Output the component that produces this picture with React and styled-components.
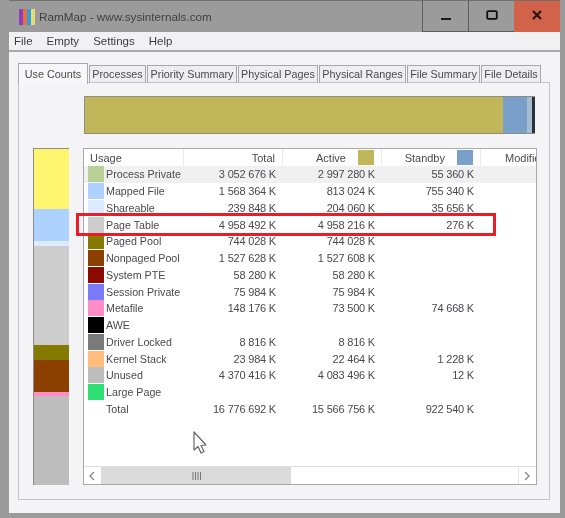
import React from 'react'
import styled, { createGlobalStyle } from 'styled-components'

const Global = createGlobalStyle`
  html, body { margin: 0; padding: 0; background: #9a9a9a; }
  body { font-family: "Liberation Sans", Arial, sans-serif; }
`

const Window = styled.div`
  position: relative;
  width: 565px;
  height: 518px;
  box-sizing: border-box;
  padding: 0 5px 5px 9px;
  background: #9b9b9b;
  display: flex;
  flex-direction: column;
  overflow: hidden;
  filter: blur(0.45px);
  color: #4a4a4f;
  font-size: 11px;
`

const TitleBar = styled.div`
  height: 32px;
  flex: none;
  display: flex;
  align-items: center;
  border-top: 1px solid #6f6f6f;
  box-sizing: border-box;
`

const AppLogo = styled.svg`
  width: 16px;
  height: 16px;
  margin-left: 10px;
  flex: none;
`

const Title = styled.div`
  margin-left: 4px;
  font-size: 11.7px;
  color: #404040;
  flex: 1;
`

const WinButton = styled.div`
  width: 46px;
  height: 31px;
  padding-bottom: 3px;
  display: flex;
  align-items: center;
  justify-content: center;
  box-sizing: border-box;
  border-left: ${p => (p.$close ? 'none' : '1px solid #5f5f5f')};
  border-bottom: ${p => (p.$close ? 'none' : '1px solid #5f5f5f')};
  background: ${p => (p.$close ? '#d2634a' : 'transparent')};
`

const MenuBar = styled.div`
  height: 20px;
  box-sizing: border-box;
  flex: none;
  display: flex;
  align-items: center;
  gap: 14px;
  padding-left: 5px;
  background: #f1f1f3;
  border-bottom: 2px solid #a9a9a9;
  font-size: 11.5px;
  color: #3c3c3c;
`

const Client = styled.div`
  flex: 1;
  min-height: 0;
  display: flex;
  flex-direction: column;
  background: #f4f4f6;
  padding: 11px 10px 13px 9px;
`

const TabRow = styled.div`
  display: flex;
  height: 19px;
  flex: none;
  position: relative;
  z-index: 1;
`

const Tab = styled.div`
  width: ${p => p.$w}px;
  box-sizing: border-box;
  height: ${p => (p.$active ? '21px' : '18px')};
  margin-top: ${p => (p.$active ? '0' : '2px')};
  margin-right: 1px;
  display: flex;
  align-items: center;
  justify-content: center;
  background: ${p => (p.$active ? '#f7f7f9' : '#eeeef0')};
  border: 1px solid #a8a8a8;
  border-bottom: ${p => (p.$active ? 'none' : '1px solid #c4c4c4')};
  white-space: nowrap;
  font-size: 10.8px;
`

const Panel = styled.div`
  flex: 1;
  min-height: 0;
  box-sizing: border-box;
  display: grid;
  grid-template-columns: 36px 454px;
  grid-template-rows: 38px 337px;
  column-gap: 14px;
  row-gap: 14px;
  padding: 13px 12px 13px 14px;
  background: #f4f4f6;
  border: 1px solid #c6c6c8;
`

const TopBar = styled.div`
  grid-column: 2;
  grid-row: 1;
  width: 451px;
  margin-left: 1px;
  display: flex;
  border: 1px solid #8d8d80;
  border-right: none;
  box-sizing: border-box;
`

const Segment = styled.div`
  width: ${p => p.$size}px;
  background: ${p => p.$color};
`

const SideBar = styled.div`
  grid-column: 1;
  grid-row: 2;
  display: flex;
  flex-direction: column;
  box-sizing: border-box;
  border-top: 1px solid #8d8d80;
  border-left: 1px solid #8d8d8d;
`

const SideSegment = styled.div`
  height: ${p => p.$size}px;
  background: ${p => p.$color};
`

const List = styled.div`
  grid-column: 2;
  grid-row: 2;
  box-sizing: border-box;
  background: #fff;
  border: 1px solid #a9a9a9;
  display: flex;
  flex-direction: column;
  overflow: hidden;
`

const HeaderRow = styled.div`
  height: 17px;
  flex: none;
  display: grid;
  grid-template-columns: 100px 99px 99px 99px 60px;
`

const HeaderCell = styled.div`
  display: flex;
  align-items: center;
  justify-content: ${p => (p.$left ? 'flex-start' : 'flex-end')};
  gap: ${p => p.$gap || 0}px;
  box-sizing: border-box;
  padding: ${p => (p.$left ? '0 0 0 6px' : '0 7px 0 0')};
  border-right: 1px solid #e9e9e9;
  white-space: nowrap;
  overflow: hidden;
`

const HeaderSwatch = styled.span`
  width: 16px;
  height: 15px;
  background: ${p => p.$color};
`

const ClippedLabel = styled.span`
  margin-left: 18px;
`

const Rows = styled.div`
  flex: 1;
  min-height: 0;
`

const Row = styled.div`
  height: 16.75px;
  display: grid;
  grid-template-columns: 100px 99px 99px 99px;
  align-items: center;
  background: ${p => (p.$selected ? '#f0f0f0' : 'transparent')};
`

const NameCell = styled.div`
  display: flex;
  align-items: center;
  height: 100%;
  padding-left: 4px;
  white-space: nowrap;
  font-size: 10.7px;
`

const Swatch = styled.span`
  width: 16px;
  height: 16px;
  margin-right: 2px;
  flex: none;
  background: ${p => p.$color || 'transparent'};
`

const Value = styled.div`
  text-align: right;
  padding-right: 7px;
  white-space: nowrap;
  letter-spacing: -0.2px;
`

const ScrollBar = styled.div`
  height: 17px;
  flex: none;
  display: flex;
  align-items: stretch;
  border-top: 1px solid #dedede;
`

const ScrollArrow = styled.div`
  width: 16px;
  flex: none;
  display: flex;
  align-items: center;
  justify-content: center;
  margin-left: ${p => p.$ml || 0}px;
  border-left: ${p => (p.$ml ? '1px solid #e4e4e4' : 'none')};
`

const Thumb = styled.div`
  width: 190px;
  margin-left: 1px;
  display: flex;
  align-items: center;
  justify-content: center;
  background: #dadada;
`

const Highlight = styled.div`
  position: absolute;
  left: 76px;
  top: 213px;
  width: 420px;
  height: 23px;
  box-sizing: border-box;
  border: 3px solid #ea1c26;
`

const Pointer = styled.svg`
  position: absolute;
  left: 192px;
  top: 431px;
  width: 16px;
  height: 25px;
`

const tabs = [
  ['Use Counts', 70, true],
  ['Processes', 57],
  ['Priority Summary', 90],
  ['Physical Pages', 80],
  ['Physical Ranges', 87],
  ['File Summary', 73],
  ['File Details', 60],
]

const rows = [
  ['Process Private', '#b8cf96', '3 052 676 K', '2 997 280 K', '55 360 K'],
  ['Mapped File', '#aed2ff', '1 568 364 K', '813 024 K', '755 340 K'],
  ['Shareable', '#dcebff', '239 848 K', '204 060 K', '35 656 K'],
  ['Page Table', '#cdcdcd', '4 958 492 K', '4 958 216 K', '276 K'],
  ['Paged Pool', '#857a00', '744 028 K', '744 028 K', ''],
  ['Nonpaged Pool', '#8b4000', '1 527 628 K', '1 527 608 K', ''],
  ['System PTE', '#8c0a00', '58 280 K', '58 280 K', ''],
  ['Session Private', '#7a7aff', '75 984 K', '75 984 K', ''],
  ['Metafile', '#ff8cc4', '148 176 K', '73 500 K', '74 668 K'],
  ['AWE', '#000000', '', '', ''],
  ['Driver Locked', '#7a7a7a', '8 816 K', '8 816 K', ''],
  ['Kernel Stack', '#ffbd7d', '23 984 K', '22 464 K', '1 228 K'],
  ['Unused', '#bdbdbd', '4 370 416 K', '4 083 496 K', '12 K'],
  ['Large Page', '#2ee073', '', '', ''],
  ['Total', null, '16 776 692 K', '15 566 756 K', '922 540 K'],
]

const sideSegments = [
  [60, '#fff56e'],
  [32, '#aed2ff'],
  [5, '#dcebff'],
  [99, '#cdcdcd'],
  [15, '#857a00'],
  [32, '#8b4000'],
  [4, '#ff8cc4'],
  [89, '#bdbdbd'],
]

const App = () => (
  <Window>
    <Global />
    <TitleBar>
      <AppLogo viewBox="0 0 16 16">
        <rect x="0" y="0" width="4" height="16" fill="#8e3fc0" />
        <rect x="4" y="0" width="4" height="16" fill="#e8703a" />
        <rect x="8" y="0" width="4" height="16" fill="#2f9ee0" />
        <rect x="12" y="0" width="4" height="16" fill="#e8dc70" />
      </AppLogo>
      <Title>RamMap - www.sysinternals.com</Title>
      <WinButton>
        <svg width="12" height="12" viewBox="0 0 12 12">
          <rect x="1" y="9" width="10" height="2" fill="#1c1c1c" />
        </svg>
      </WinButton>
      <WinButton>
        <svg width="12" height="12" viewBox="0 0 12 12">
          <rect x="1.2" y="2.2" width="9.6" height="7.6" rx="1" fill="none" stroke="#111" strokeWidth="1.8" />
        </svg>
      </WinButton>
      <WinButton $close>
        <svg width="12" height="12" viewBox="0 0 12 12">
          <path d="M2 2 L10 10 M10 2 L2 10" stroke="#2a1410" strokeWidth="2.2" fill="none" />
        </svg>
      </WinButton>
    </TitleBar>

    <MenuBar>
      <span>File</span>
      <span>Empty</span>
      <span>Settings</span>
      <span>Help</span>
    </MenuBar>

    <Client>
      <TabRow>
        {tabs.map(([label, w, active]) => (
          <Tab key={label} $w={w} $active={active}>{label}</Tab>
        ))}
      </TabRow>
      <Panel>
        <TopBar>
          <Segment $size={418} $color="#c1b75a" />
          <Segment $size={24} $color="#7a9fc8" />
          <Segment $size={5} $color="#a8bcd0" />
          <Segment $size={3} $color="#2c3038" />
        </TopBar>
        <SideBar>
          {sideSegments.map(([h, c], i) => (
            <SideSegment key={i} $size={h} $color={c} />
          ))}
        </SideBar>
        <List>
          <HeaderRow>
            <HeaderCell $left>Usage</HeaderCell>
            <HeaderCell>Total</HeaderCell>
            <HeaderCell $gap={12}>Active<HeaderSwatch $color="#c1b75a" /></HeaderCell>
            <HeaderCell $gap={12}>Standby<HeaderSwatch $color="#7a9fc8" /></HeaderCell>
            <HeaderCell $left><ClippedLabel>Modified</ClippedLabel></HeaderCell>
          </HeaderRow>
          <Rows>
            {rows.map(([name, color, total, active, standby], i) => (
              <Row key={name} $selected={i === 0}>
                <NameCell><Swatch $color={color} />{name}</NameCell>
                <Value>{total}</Value>
                <Value>{active}</Value>
                <Value>{standby}</Value>
              </Row>
            ))}
          </Rows>
          <ScrollBar>
            <ScrollArrow>
              <svg width="8" height="10" viewBox="0 0 8 10">
                <path d="M6 1 L2 5 L6 9" stroke="#888" strokeWidth="1.3" fill="none" />
              </svg>
            </ScrollArrow>
            <Thumb>
              <svg width="9" height="8" viewBox="0 0 9 8">
                <path d="M1 0 V8 M3.5 0 V8 M6 0 V8 M8.5 0 V8" stroke="#777" strokeWidth="1" />
              </svg>
            </Thumb>
            <ScrollArrow $ml={227}>
              <svg width="8" height="10" viewBox="0 0 8 10">
                <path d="M2 1 L6 5 L2 9" stroke="#888" strokeWidth="1.3" fill="none" />
              </svg>
            </ScrollArrow>
          </ScrollBar>
        </List>
      </Panel>
    </Client>

    <Highlight />
    <Pointer viewBox="0 0 16 25">
      <path d="M2 1 V19 L6 15.5 L9 22 L12 20.5 L9 14.5 L14 14 Z" fill="#fff" stroke="#666" strokeWidth="1.2" strokeLinejoin="round" />
    </Pointer>
  </Window>
)

export default App
